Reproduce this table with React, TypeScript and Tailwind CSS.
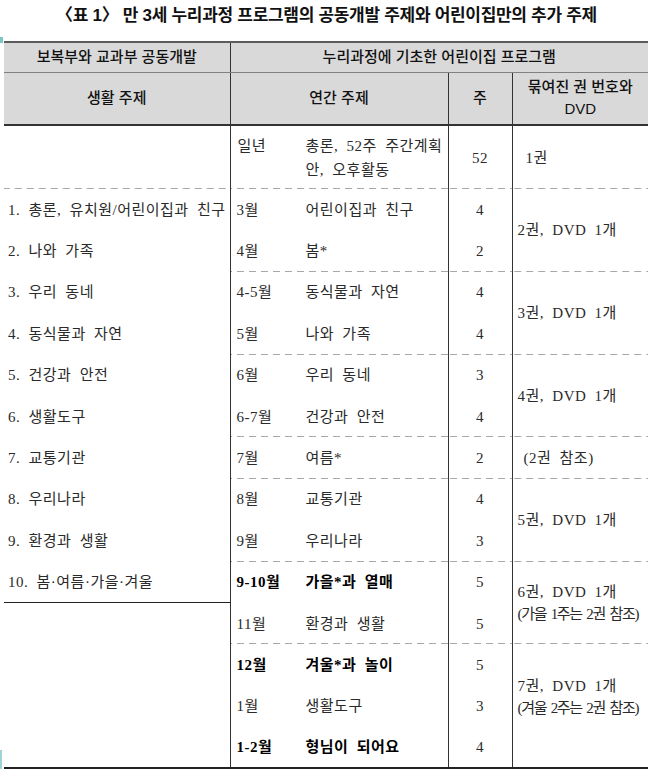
import React from 'react'

type PlanRow = {
  life?: string
  month: string
  topic: string
  weeks: number
  bold?: boolean
  dash?: boolean
}

type BookGroup = {
  span: number
  lines: string[]
  indent?: boolean
  last?: boolean
}

const rows: PlanRow[] = [
  { life: '1. 총론, 유치원/어린이집과 친구', month: '3월', topic: '어린이집과 친구', weeks: 4 },
  { life: '2. 나와 가족', month: '4월', topic: '봄*', weeks: 2, dash: true },
  { life: '3. 우리 동네', month: '4-5월', topic: '동식물과 자연', weeks: 4 },
  { life: '4. 동식물과 자연', month: '5월', topic: '나와 가족', weeks: 4, dash: true },
  { life: '5. 건강과 안전', month: '6월', topic: '우리 동네', weeks: 3 },
  { life: '6. 생활도구', month: '6-7월', topic: '건강과 안전', weeks: 4, dash: true },
  { life: '7. 교통기관', month: '7월', topic: '여름*', weeks: 2, dash: true },
  { life: '8. 우리나라', month: '8월', topic: '교통기관', weeks: 4 },
  { life: '9. 환경과 생활', month: '9월', topic: '우리나라', weeks: 3, dash: true },
  { life: '10. 봄·여름·가을·겨울', month: '9-10월', topic: '가을*과 열매', weeks: 5, bold: true },
  { month: '11월', topic: '환경과 생활', weeks: 5, dash: true },
  { month: '12월', topic: '겨울*과 놀이', weeks: 5, bold: true },
  { month: '1월', topic: '생활도구', weeks: 3 },
  { month: '1-2월', topic: '형님이 되어요', weeks: 4, bold: true },
]

// keyed by the row index where the merged cell starts
const books: Record<number, BookGroup> = {
  0: { span: 2, lines: ['2권, DVD 1개'] },
  2: { span: 2, lines: ['3권, DVD 1개'] },
  4: { span: 2, lines: ['4권, DVD 1개'] },
  6: { span: 1, lines: ['(2권 참조)'], indent: true },
  7: { span: 2, lines: ['5권, DVD 1개'] },
  9: { span: 2, lines: ['6권, DVD 1개', '(가을 1주는 2권 참조)'] },
  11: { span: 3, lines: ['7권, DVD 1개', '(겨울 2주는 2권 참조)'], last: true },
}

const dashed =
  'bg-[linear-gradient(to_right,#a8a8a8_58%,transparent_58%)] bg-[length:12px_1px] bg-repeat-x bg-bottom'

const sans = "font-['Liberation_Sans','Noto_Sans_CJK_KR',sans-serif]"
const serif = "font-['Liberation_Serif','Noto_Sans_CJK_KR',serif]"

export default function App() {
  const lastIndex = rows.length - 1

  return (
    <div className="relative w-[653px] h-[772px] overflow-hidden bg-white text-[#1f1f1f]">
      <span className="absolute left-0 top-[37px] h-[6px] w-[3px] bg-[#7fc4c9]" />
      <span className="absolute left-0 top-[750px] h-[19px] w-[2px] bg-[#9fd3d6]" />

      <h1
        className={`${sans} h-[41px] pt-[5px] text-center text-[17px] leading-[22px] font-bold tracking-[-0.3px] text-[#111]`}
      >
        〈표 1〉 만 3세 누리과정 프로그램의 공동개발 주제와 어린이집만의 추가 주제
      </h1>

      <table className="ml-[4px] w-[644px] table-fixed border-collapse">
        <colgroup>
          <col className="w-[226px]" />
          <col className="w-[218px]" />
          <col className="w-[64px]" />
          <col className="w-[136px]" />
        </colgroup>
        <thead className={`${sans} bg-[#d9d9d9] text-[15px] text-[#111]`}>
          <tr className="h-[30px] border-t-2 border-[#5c5c5c]">
            <th className="border-b border-[#808080] font-medium">보복부와 교과부 공동개발</th>
            <th colSpan={3} className="border-b border-l border-[#808080] border-l-[#333] font-medium">
              누리과정에 기초한 어린이집 프로그램
            </th>
          </tr>
          <tr className="h-[53px] border-b-2 border-[#333]">
            <th className="font-medium">생활 주제</th>
            <th className="border-l border-[#333] font-medium">연간 주제</th>
            <th className="border-l border-[#333] font-medium">주</th>
            <th className="border-l border-[#333] font-medium leading-[22px]">
              묶여진 권 번호와
              <br />
              DVD
            </th>
          </tr>
        </thead>
        <tbody className={`${serif} text-[15px] leading-[24px] tracking-[0.5px] [word-spacing:4px] text-[#2a2a2a]`}>
          <tr className="h-[64px]">
            <td className={dashed} />
            <td className={`border-l border-[#333] ${dashed}`}>
              <div className="flex pl-[7px] pr-[2px]">
                <span className="w-[68px] shrink-0">일년</span>
                <span>총론, 52주 주간계획안, 오후활동</span>
              </div>
            </td>
            <td className={`border-l border-[#333] text-center ${dashed}`}>52</td>
            <td className={`border-l border-[#333] pl-[13px] ${dashed}`}>1권</td>
          </tr>

          {rows.map((row, i) => {
            const group = books[i]
            const isLast = i === lastIndex
            const midBorder = isLast ? 'border-b-2 border-b-[#222]' : row.dash ? dashed : ''
            const weight = row.bold ? 'font-bold text-black' : ''

            return (
              <tr key={row.month} className="h-[41.4px]">
                {row.life !== undefined ? (
                  <td className={`pl-[4px] whitespace-nowrap ${i === 9 ? 'border-b border-b-[#222]' : ''}`}>
                    {row.life}
                  </td>
                ) : i === 10 ? (
                  <td rowSpan={4} className="border-b-2 border-b-[#222]" />
                ) : null}

                <td className={`border-l border-l-[#333] ${midBorder}`}>
                  <div className={`flex pl-[6px] whitespace-nowrap ${weight}`}>
                    <span className="w-[69px] shrink-0">{row.month}</span>
                    <span>{row.topic}</span>
                  </div>
                </td>

                <td className={`border-l border-l-[#333] text-center ${midBorder}`}>{row.weeks}</td>

                {group && (
                  <td
                    rowSpan={group.span}
                    className={`border-l border-l-[#333] align-middle ${
                      group.last ? 'border-b-2 border-b-[#222] pb-[18px]' : dashed
                    } ${group.indent ? 'pl-[11px]' : 'pl-[5px]'}`}
                  >
                    {group.lines.map((line, j) => (
                      <div
                        key={line}
                        className={
                          j > 0
                            ? 'leading-[22px] tracking-[-1.3px] [word-spacing:2px] whitespace-nowrap'
                            : 'leading-[22px]'
                        }
                      >
                        {line}
                      </div>
                    ))}
                  </td>
                )}
              </tr>
            )
          })}
        </tbody>
      </table>
    </div>
  )
}
